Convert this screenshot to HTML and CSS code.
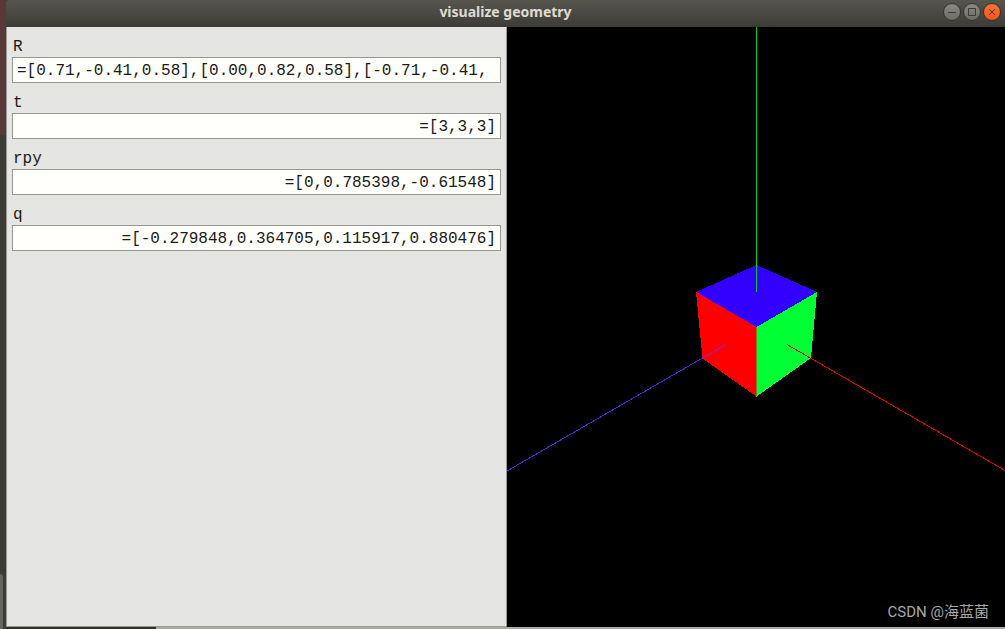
FILE: index.html
```html
<!DOCTYPE html>
<html lang="en">

<head>
    <meta charset="UTF-8">
    <meta name="viewport" content="width=device-width, initial-scale=1.0">
    <title>visualize geometry</title>
    <link rel="stylesheet" href="styles.css">
</head>

<body>
    <div class="desktop">
        <div class="launcher">
            <div class="launcher-top"></div>
            <div class="launcher-mid"></div>
            <div class="launcher-tab"></div>
        </div>
        <div class="window">
            <header class="titlebar">
                <h1 class="title">visualize geometry</h1>
                <div class="controls">
                    <button class="control" type="button" aria-label="Minimize">
                        <svg viewBox="0 0 16 16"><path d="M4 8.5h8" /></svg>
                    </button>
                    <button class="control" type="button" aria-label="Maximize">
                        <svg viewBox="0 0 16 16"><path d="M4.5 4.5h7v7h-7z" /></svg>
                    </button>
                    <button class="control close" type="button" aria-label="Close">
                        <svg viewBox="0 0 16 16"><path d="M5 5l6 6M11 5l-6 6" /></svg>
                    </button>
                </div>
            </header>

            <main class="content">
                <form class="panel">
                    <label class="label" for="rotation">R</label>
                    <input class="field long" type="text" id="rotation" value="=[0.71,-0.41,0.58],[0.00,0.82,0.58],[-0.71,-0.41,">
                    <label class="label" for="translation">t</label>
                    <input class="field" type="text" id="translation" value="=[3,3,3]">
                    <label class="label" for="rpy">rpy</label>
                    <input class="field" type="text" id="rpy" value="=[0,0.785398,-0.61548]">
                    <label class="label" for="quaternion">q</label>
                    <input class="field" type="text" id="quaternion" value="=[-0.279848,0.364705,0.115917,0.880476]">
                </form>

                <div class="view">
                    <svg class="scene" viewBox="0 0 498 600" preserveAspectRatio="xMidYMid slice" shape-rendering="crispEdges">
                        <!-- cube faces -->
                        <polygon fill="#3300ff" points="249.5,238 310,265 249.5,300 189,265" />
                        <polygon fill="#ff0000" points="189,265 249.5,300 249.5,369.5 195.5,331.5" />
                        <polygon fill="#00ff33" points="310,265 249.5,300 249.5,369.5 304,331" />
                        <rect fill="#7f7f1a" x="249" y="300" width="1" height="69" />
                        <!-- axes -->
                        <rect fill="#00cc28" x="249" y="0" width="1" height="265" />
                        <path stroke="#e60000" d="M280 317.5L498 443.5" />
                        <path stroke="#4429dd" d="M0 444L195.5 331" />
                        <path stroke="#9b22b4" d="M195.5 331L219 317.5" />
                    </svg>
                    <span class="watermark">CSDN @海蓝菌</span>
                </div>
            </main>

            <div class="below"></div>
        </div>
    </div>
</body>

</html>
```
FILE: styles.css
```css
* {
    box-sizing: border-box;
}

body {
    margin: 0;
    font-family: "Liberation Sans", Arial, sans-serif;
    background-color: #3c3b37;
}

.desktop {
    display: flex;
    height: 100vh;
    overflow: hidden;
}

/* Strip of the desktop beside the window */
.launcher {
    display: flex;
    flex-direction: column;
    width: 6px;
    flex-shrink: 0;
    background-color: #3c3b36;
}

.launcher-top {
    height: 135px;
    background-color: #593838;
}

.launcher-mid {
    flex: 1;
}

.launcher-tab {
    width: 3px;
    height: 55px;
    border-top-right-radius: 3px;
    background-color: #66655f;
}

.window {
    display: flex;
    flex-direction: column;
    flex: 1;
    min-width: 0;
}

/* Title bar */
.titlebar {
    display: grid;
    grid-template-columns: 1fr auto 1fr;
    align-items: center;
    height: 27px;
    padding: 0 4px 3px;
    border-top-left-radius: 3px;
    background: linear-gradient(#57564d, #3c3b37);
}

.title {
    grid-column: 2;
    margin: 0;
    font-family: "Noto Sans", "Open Sans", sans-serif;
    font-size: 14px;
    line-height: 20px;
    color: #dfdbd2;
}

.controls {
    display: flex;
    justify-content: flex-end;
    gap: 2px;
}

.control {
    width: 18px;
    height: 18px;
    padding: 0;
    border: 1px solid #34332f;
    border-radius: 50%;
    background: linear-gradient(#8b8a82, #6d6c65);
    color: #3c3b37;
}

.control svg {
    display: block;
    width: 16px;
    height: 16px;
    fill: none;
    stroke: currentColor;
}

.close {
    background: linear-gradient(#ff7238, #f55412);
}

/* Value panel and 3D view */
.content {
    display: grid;
    grid-template-columns: 501fr 498fr;
    grid-template-rows: 100%;
    flex: 1;
    min-height: 0;
}

.panel {
    min-width: 0;
    padding: 0 5px;
    border: 1px solid #999996;
    border-top: none;
    background-color: #e5e5e3;
}

.label,
.field {
    display: block;
    font-family: "Liberation Mono", "Courier New", monospace;
    font-size: 16px;
    color: #1a1a1a;
}

.label {
    height: 30px;
    padding: 10px 1px 0;
    line-height: 20px;
}

.field {
    width: 100%;
    height: 26px;
    padding: 2px 4px 0;
    border: 1px solid #969692;
    border-radius: 0;
    background-color: #fffffb;
    text-align: right;
}

.long {
    text-align: left;
}

.view {
    position: relative;
    min-width: 0;
    background-color: #000;
}

.scene {
    display: block;
    width: 100%;
    height: 100%;
}

.watermark {
    position: absolute;
    right: 16px;
    bottom: 5px;
    font-family: Roboto, "Noto Sans CJK SC", sans-serif;
    font-size: 15px;
    line-height: 20px;
    color: #a8a8a8;
}

.below {
    height: 2px;
    background: linear-gradient(to right, #2d2d2a 150px, #aaa9a3 150px);
}
```
